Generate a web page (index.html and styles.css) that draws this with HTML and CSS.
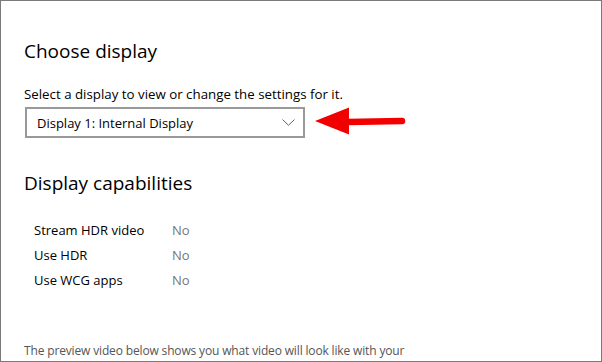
FILE: index.html
```html
<!DOCTYPE html>
<html>
<head>
<meta charset="utf-8">
<link rel="stylesheet" href="styles.css">
</head>
<body>
<div class="frame">
  <h2 class="title">Choose display</h2>
  <p class="hint">Select a display to view or change the settings for it.</p>
  <div class="pick-row">
    <div class="select">
      <span>Display 1: Internal Display</span>
      <svg class="chev" width="13" height="7" viewBox="0 0 13 7"><path d="M0.5 0.5 L6.5 6.3 L12.5 0.5" fill="none" stroke="#666" stroke-width="1"/></svg>
    </div>
    <svg class="arrow" width="94" height="30" viewBox="0 0 94 30">
      <path d="M1 15 L35 1.5 L35 28.5 Z" fill="#f20000"/>
      <path d="M34 16 L88 15" stroke="#f20000" stroke-width="6.5" stroke-linecap="round" fill="none"/>
    </svg>
  </div>
  <h2 class="title cap">Display capabilities</h2>
  <div class="caps">
    <div class="row"><span class="k">Stream HDR video</span><span class="v">No</span></div>
    <div class="row"><span class="k">Use HDR</span><span class="v">No</span></div>
    <div class="row"><span class="k">Use WCG apps</span><span class="v">No</span></div>
  </div>
  <p class="foot">The preview video below shows you what video will look like with your</p>
</div>
</body>
</html>
```
FILE: styles.css
```css
html, body { margin: 0; padding: 0; background: #fff; }
body { font-family: "Open Sans", "Noto Sans", sans-serif; color: #000; }
.frame {
  box-sizing: border-box;
  width: 602px;
  height: 362px;
  border: 1px solid #7a7a7a;
  padding: 37px 0 0 23px;
  overflow: hidden;
}
.title {
  margin: 0;
  font-weight: 400;
  font-size: 19px;
  line-height: 26px;
  color: #000;
}
.hint {
  margin: 21px 0 0;
  font-size: 13.3px;
  line-height: 18px;
  color: #000;
}
.pick-row { display: flex; align-items: center; margin-top: 4px; }
.select {
  box-sizing: border-box;
  width: 280px;
  height: 31px;
  border: 2px solid #999;
  margin-left: 1px;
  display: flex;
  align-items: center;
  justify-content: space-between;
  padding: 0 8px 0 10px;
  font-size: 13px;
  color: #000;
}
.chev { display: block; }
.arrow { display: block; margin-left: 9px; margin-top: -3px; }
.cap { margin-top: 32px; }
.caps { margin: 21px 0 0 10px; }
.row { display: flex; height: 25px; align-items: center; font-size: 13px; }
.k { width: 138px; color: #000; }
.v { color: #767676; }
.foot { margin: 50px 0 0; font-size: 12px; line-height: 18px; color: #555; letter-spacing: -0.15px; }
```
